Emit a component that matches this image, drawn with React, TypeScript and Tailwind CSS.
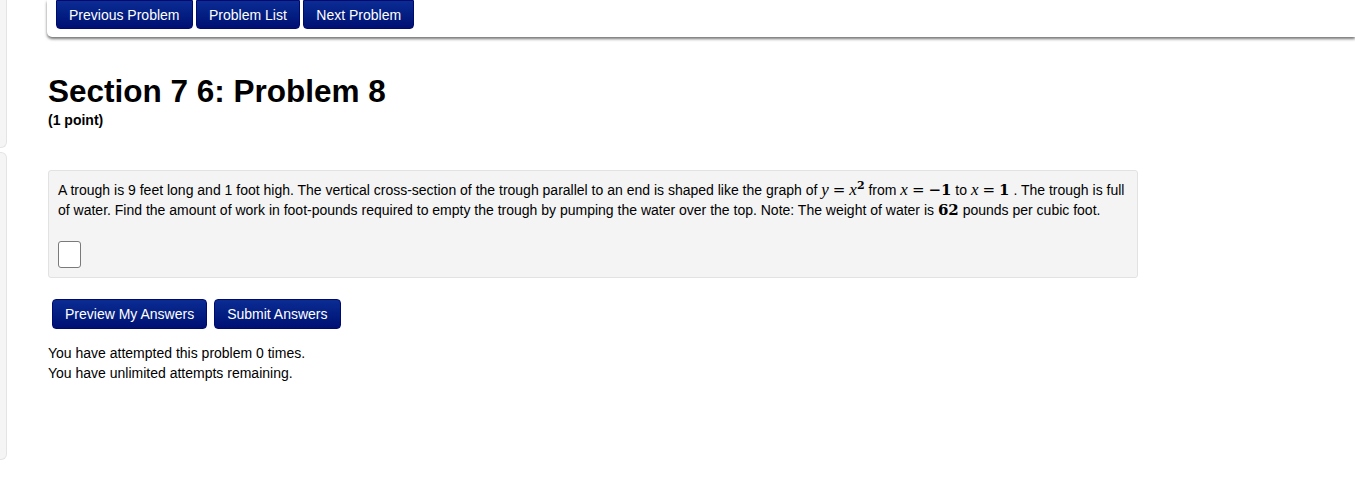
import React from "react";

const navButtons = ["Previous Problem", "Problem List", "Next Problem"];

function Btn({ label, className = "" }: { label: string; className?: string }) {
  return (
    <button
      type="button"
      className={`flex items-center border border-[#000a6e] bg-gradient-to-b from-[#0c2c94] to-[#000f72] text-[14px] leading-[20px] text-white ${className}`}
    >
      {label}
    </button>
  );
}

function MathVar({ children }: { children: React.ReactNode }) {
  return <span className="font-['Liberation_Serif',serif] italic text-[17px]">{children}</span>;
}

function MathNum({ children }: { children: React.ReactNode }) {
  return (
    <span className="font-['DejaVu_Serif',serif] font-semibold text-[15px]">{children}</span>
  );
}

function Eq() {
  return <span className="mx-[4px] font-['DejaVu_Serif',serif] text-[15px]">=</span>;
}

export default function App() {
  return (
    <div className="flex min-h-[482px] w-[1355px] bg-white font-['Liberation_Sans',Arial,sans-serif] text-black">
      {/* side rail, mostly off screen */}
      <div className="flex w-[7px] shrink-0 flex-col">
        <div className="h-[148px] rounded-br-[6px] border-r border-b border-[#e4e4e4] bg-[#f5f5f5]" />
        <div className="mt-[4px] h-[308px] rounded-r-[6px] border-y border-r border-[#e4e4e4] bg-[#f5f5f5]" />
      </div>

      <div className="flex-1 pl-[40px]">
        <div className="flex h-[37px] gap-[3.5px] rounded-bl-[5px] bg-white pl-[9px] shadow-[0_2px_3px_rgba(0,0,0,0.55)]">
          {navButtons.map((b) => (
            <Btn key={b} label={b} className="h-[29px] rounded-b-[4px] px-[12px]" />
          ))}
        </div>

        <div className="pl-[1px]">
          <h2 className="mt-[37px] text-[31.5px] font-bold leading-[34.65px]">Section 7 6: Problem 8</h2>
          <div className="mt-[1px] text-[14px] font-bold leading-[20px]">(1 point)</div>

          <div className="mt-[40px] w-[1090px] rounded-[3px] border border-[#e2e2e2] bg-[#f4f4f4] px-[9px] pt-[9px] pb-[9px] text-[14px] leading-[20px]">
            <p>
              <span className="whitespace-nowrap">
                A trough is 9 feet long and 1 foot high. The vertical cross-section of the trough parallel to an end is
                shaped like the graph of <MathVar>y</MathVar>
                <Eq />
                <MathVar>x</MathVar>
                <sup className="font-['DejaVu_Serif',serif] text-[11px] font-semibold">2</sup> from{" "}
                <MathVar>x</MathVar>
                <Eq />
                <MathNum>−1</MathNum> to <MathVar>x</MathVar>
                <Eq />
                <MathNum>1</MathNum> . The trough is full
              </span>
              <br />
              of water. Find the amount of work in foot-pounds required to empty the trough by pumping the water over the
              top. Note: The weight of water is <MathNum>62</MathNum> pounds per cubic foot.
            </p>
            <div className="mt-[21px] h-[27px] w-[23px] rounded-[3px] border border-[#7a7a7a] bg-white" />
          </div>

          <div className="mt-[21px] flex gap-[7px] pl-[4px]">
            <Btn label="Preview My Answers" className="h-[30px] rounded-[4px] px-[12px]" />
            <Btn label="Submit Answers" className="h-[30px] rounded-[4px] px-[12px]" />
          </div>

          <div className="mt-[14px] text-[14px] leading-[20px]">
            <div>You have attempted this problem 0 times.</div>
            <div>You have unlimited attempts remaining.</div>
          </div>
        </div>
      </div>
    </div>
  );
}
